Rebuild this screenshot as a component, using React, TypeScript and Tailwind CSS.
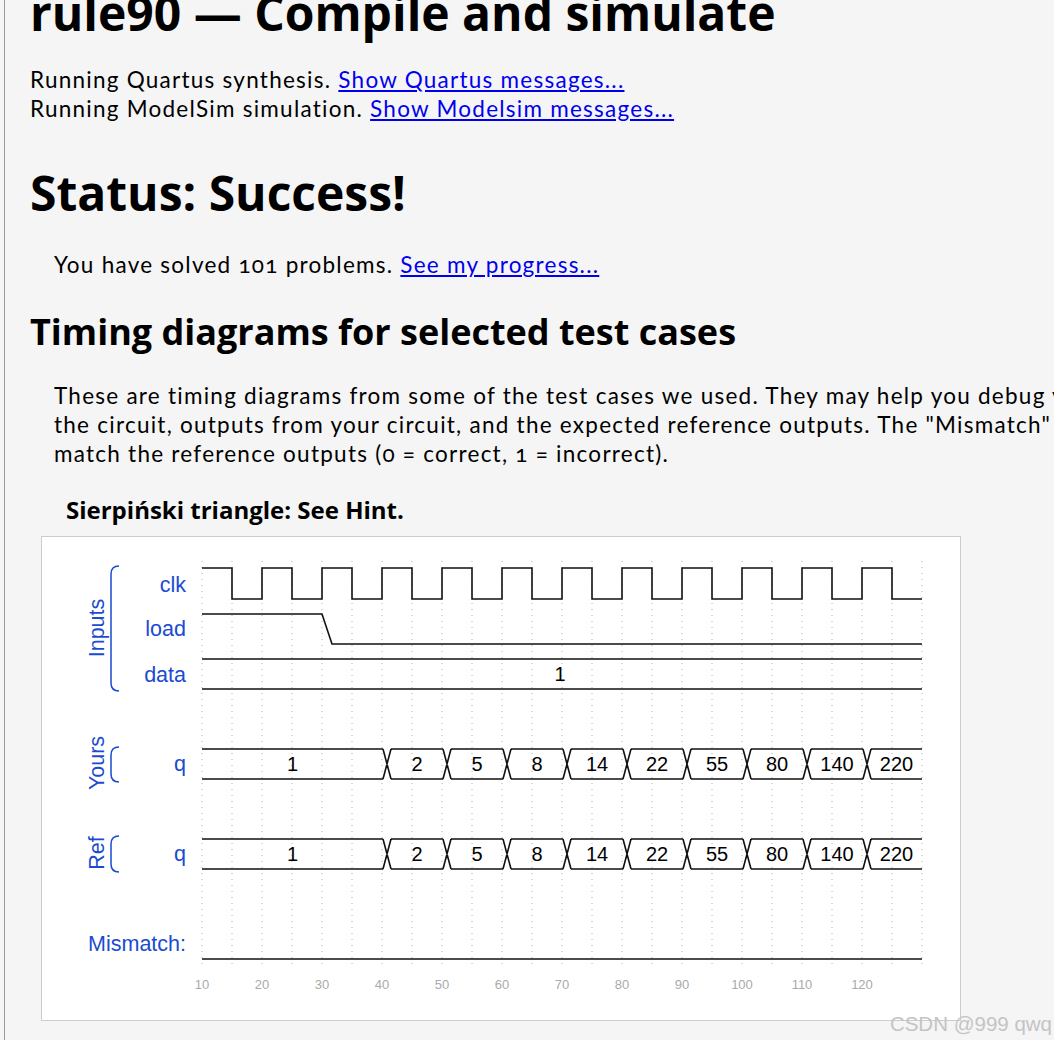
import React from "react";

const BLUE = "#1a4bd0";
const X0 = 202;
const X1 = 922;
const TRANS = [383, 443, 503, 563, 623, 683, 743, 803, 863];
const W = 8;
const VALUES = ["1", "2", "5", "8", "14", "22", "55", "80", "140", "220"];

function Bus({ top, values, trans }: { top: number; values: string[]; trans: number[] }) {
  const bot = top + 30;
  const mid = top + 15;
  const starts = [X0, ...trans.map((t) => t + W)];
  const ends = [...trans, X1];
  let d = "";
  starts.forEach((s, i) => {
    d += `M${s},${top} H${ends[i]} M${s},${bot} H${ends[i]} `;
  });
  trans.forEach((t) => {
    d += `M${t},${top} L${t + W},${bot} M${t},${bot} L${t + W},${top} `;
  });
  return (
    <g>
      <path d={d} fill="none" stroke="#111" strokeWidth={1.6} />
      {values.map((v, i) => (
        <text
          key={i}
          x={trans.length === 0 ? 560 : (starts[i] + ends[i]) / 2}
          y={mid}
          textAnchor="middle"
          dominantBaseline="central"
          fontSize={20}
          fill="#000"
        >
          {v}
        </text>
      ))}
    </g>
  );
}

function Bracket({ y0, y1 }: { y0: number; y1: number }) {
  return (
    <path
      d={`M119,${y0} Q111,${y0} 111,${y0 + 8} V${y1 - 8} Q111,${y1} 119,${y1}`}
      fill="none"
      stroke={BLUE}
      strokeWidth={1.5}
    />
  );
}

function Diagram() {
  const grid = Array.from({ length: 25 }, (_, k) => X0 + 30 * k);
  let clk = `M${X0},569`;
  for (let k = 0; k < 24; k++) {
    const high = k % 2 === 0;
    clk += ` H${X0 + 30 * (k + 1)}`;
    if (k < 23) clk += ` V${high ? 600 : 569}`;
  }
  const ticks = Array.from({ length: 12 }, (_, k) => ({ x: X0 + 60 * k, label: String(10 + 10 * k) }));
  const labels: [string, number][] = [
    ["clk", 585.5],
    ["load", 630],
    ["data", 675.5],
    ["q", 765],
    ["q", 855],
    ["Mismatch:", 945],
  ];
  return (
    <svg
      width={918}
      height={483}
      viewBox="42 538 918 483"
      className="block"
      style={{ fontFamily: '"Liberation Sans", Arial, sans-serif' }}
    >
      {grid.map((x) => (
        <line key={x} x1={x} y1={562} x2={x} y2={967} stroke="#b0b0b0" strokeWidth={1} strokeDasharray="1 5" />
      ))}
      {labels.map(([t, y], i) => (
        <text key={i} x={186} y={y} textAnchor="end" dominantBaseline="central" fontSize={21.5} fill={BLUE}>
          {t}
        </text>
      ))}
      <text x={97} y={629} transform="rotate(-90 97 629)" textAnchor="middle" dominantBaseline="central" fontSize={21.5} fill={BLUE}>
        Inputs
      </text>
      <text x={97} y={764} transform="rotate(-90 97 764)" textAnchor="middle" dominantBaseline="central" fontSize={21.5} fill={BLUE}>
        Yours
      </text>
      <text x={97} y={854} transform="rotate(-90 97 854)" textAnchor="middle" dominantBaseline="central" fontSize={21.5} fill={BLUE}>
        Ref
      </text>
      <Bracket y0={567} y1={692} />
      <Bracket y0={748} y1={783} />
      <Bracket y0={837} y1={873} />
      <path d={clk} fill="none" stroke="#111" strokeWidth={1.6} />
      <path d={`M${X0},615 H322 L332,645 H${X1}`} fill="none" stroke="#111" strokeWidth={1.6} />
      <Bus top={660} values={["1"]} trans={[]} />
      <Bus top={750} values={VALUES} trans={TRANS} />
      <Bus top={840} values={VALUES} trans={TRANS} />
      <path d={`M${X0},960 H${X1}`} fill="none" stroke="#111" strokeWidth={1.6} />
      {ticks.map((t) => (
        <text key={t.x} x={t.x} y={985} textAnchor="middle" dominantBaseline="central" fontSize={13} fill="#aaa">
          {t.label}
        </text>
      ))}
    </svg>
  );
}

export default function App() {
  return (
    <div className="relative w-[1054px] h-[1040px] overflow-hidden bg-[#f5f5f5] text-black font-['Lato',sans-serif]">
      <div className="ml-[4px] flex h-full w-[1600px] flex-col border-l border-[#999] pl-[25px]">
        <h1 className="mt-[-13px] whitespace-nowrap font-['Open_Sans',sans-serif] text-[48px] font-bold leading-[52px]">
          rule90 — Compile and simulate
        </h1>
        <p className="mt-[26px] text-[22.5px] leading-[29px] tracking-[1.25px] whitespace-nowrap">
          Running Quartus synthesis. <a href="#" className="text-[#0000ee] underline">Show Quartus messages...</a>
          <br />
          Running ModelSim simulation. <a href="#" className="text-[#0000ee] underline">Show Modelsim messages...</a>
        </p>
        <h1 className="mt-[44px] whitespace-nowrap font-['Open_Sans',sans-serif] text-[48px] font-bold leading-[52px]">
          Status: Success!
        </h1>
        <p className="mt-[31px] pl-[24px] text-[22.5px] leading-[29px] tracking-[1.25px] whitespace-nowrap [font-variant-numeric:oldstyle-nums]">
          You have solved 101 problems. <a href="#" className="text-[#0000ee] underline">See my progress...</a>
        </p>
        <h2 className="mt-[33px] whitespace-nowrap font-['Open_Sans',sans-serif] text-[36px] font-bold leading-[40px]">
          Timing diagrams for selected test cases
        </h2>
        <p className="mt-[29px] pl-[24px] text-[22.5px] leading-[29px] tracking-[1.25px] whitespace-nowrap [font-variant-numeric:oldstyle-nums]">
          These are timing diagrams from some of the test cases we used. They may help you debug your circuit. The timing diagrams show the inputs to
          <br />
          the circuit, outputs from your circuit, and the expected reference outputs. The "Mismatch" trace shows which time steps the outputs don't
          <br />
          match the reference outputs (0 = correct, 1 = incorrect).
        </p>
        <div className="mt-[27px] pl-[36px] font-['Open_Sans',sans-serif] text-[24px] font-bold leading-[29px] whitespace-nowrap">
          Sierpiński triangle: See Hint.
        </div>
        <div className="mt-[12px] ml-[11px] h-[485px] w-[920px] shrink-0 border border-[#ccc] bg-white">
          <Diagram />
        </div>
      </div>
      <div className="absolute right-[2px] bottom-[6px] whitespace-nowrap font-['Liberation_Sans',Arial,sans-serif] text-[20.5px] leading-none text-[#c4c4c4]">
        CSDN @999 qwq
      </div>
    </div>
  );
}
